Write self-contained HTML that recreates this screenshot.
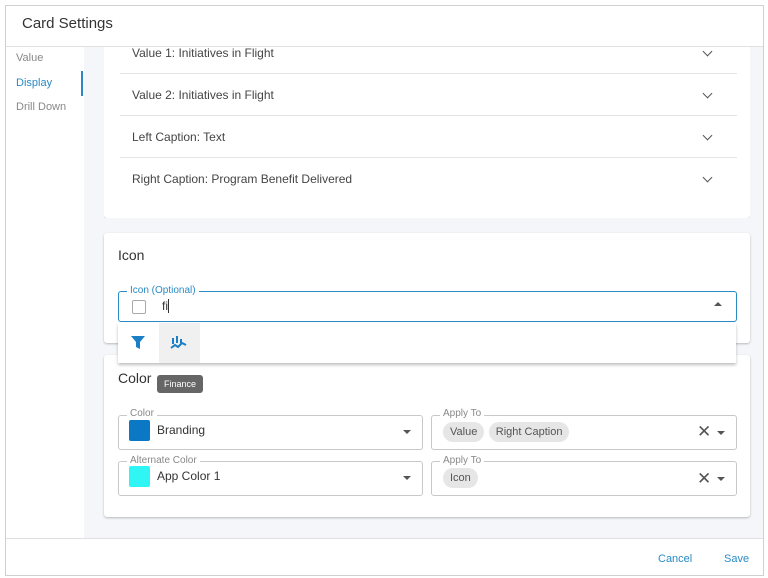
<!DOCTYPE html><html><head><style>
*{box-sizing:border-box;margin:0;padding:0}
body{width:768px;height:578px;background:#fff;font-family:"Liberation Sans",sans-serif;position:relative;overflow:hidden;color:#333}
.a{position:absolute}
.dlg{left:5px;top:5px;width:759px;height:571px;border:1px solid #d0d0d0;background:#fff}
.t{font-size:15px;color:#333}
.card{background:#fff;box-shadow:0 1px 2px rgba(0,0,0,.25);border-radius:3px}
.row{left:120px;width:617px;font-size:12px;color:#444;border-bottom:1px solid #e4e4e4}
.chev{right:26px;width:7px;height:7px;border-right:1.5px solid #555;border-bottom:1.5px solid #555;transform:rotate(45deg)}
.fld{border:1px solid #c8c8c8;border-radius:3px;height:35px}
.lbl{font-size:10px;color:#888;background:#fff;padding:0 3px}
.chip{background:#e6e6e6;border-radius:11px;font-size:11px;color:#555;padding:4px 7px;display:inline-block}
.tri{width:0;height:0;border-left:4px solid transparent;border-right:4px solid transparent;border-top:4px solid #555}
</style></head><body>
<div class="a dlg"></div>
<div class="a card" style="left:104px;top:40px;width:646px;height:178px"></div>
<div class="a" style="left:6px;top:6px;width:757px;height:40px;background:#fff"></div>
<div class="a t" style="left:22px;top:15px">Card Settings</div>
<div class="a" style="left:6px;top:46px;width:757px;border-top:1px solid #e0e0e0"></div>
<div class="a" style="left:84px;top:47px;width:20px;height:491px;background:#f4f6f9"></div>
<div class="a" style="left:104px;top:218px;width:659px;height:320px;background:#f4f6f9"></div>
<div class="a" style="left:750px;top:47px;width:13px;height:171px;background:#f4f6f9"></div>
<div class="a" style="left:16px;top:52px;font-size:11px;color:#888">Value</div>
<div class="a" style="left:16px;top:77px;font-size:11px;color:#2a8ac4">Display</div>
<div class="a" style="left:81px;top:71px;width:2px;height:25px;background:#2a8ac4"></div>
<div class="a" style="left:16px;top:101px;font-size:11px;color:#888">Drill Down</div>
<div class="a row" style="top:46px;height:28px;padding:0 12px">Value 1: Initiatives in Flight<div class="a chev" style="top:2px"></div></div>
<div class="a row" style="top:74px;height:42px;padding:14px 12px">Value 2: Initiatives in Flight<div class="a chev" style="top:16px"></div></div>
<div class="a row" style="top:116px;height:42px;padding:14px 12px">Left Caption: Text<div class="a chev" style="top:16px"></div></div>
<div class="a" style="left:120px;top:158px;width:617px;height:42px;padding:14px 12px;font-size:12px;color:#444">Right Caption: Program Benefit Delivered<div class="a chev" style="top:16px"></div></div>
<div class="a card" style="left:104px;top:233px;width:646px;height:110px"></div>
<div class="a t" style="left:118px;top:247px;font-size:14px">Icon</div>
<div class="a" style="left:118px;top:291px;width:619px;height:31px;border:1.5px solid #2a8ac4;border-radius:3px"></div>
<div class="a" style="left:127px;top:285px;font-size:10px;color:#2a8ac4;background:#fff;padding:0 3px">Icon (Optional)</div>
<div class="a" style="left:132px;top:300px;width:14px;height:14px;border:1px solid #aaa;border-radius:2px"></div>
<div class="a" style="left:162px;top:299px;font-size:12px;color:#333">f<span style="border-right:1px solid #333">i</span></div>
<div class="a tri" style="left:714px;top:302px;transform:rotate(180deg)"></div>
<div class="a card" style="left:104px;top:355px;width:646px;height:162px"></div>
<div class="a" style="left:118px;top:323px;width:618px;height:40px;background:#fff;box-shadow:0 2px 3px rgba(0,0,0,.25)"></div>
<div class="a" style="left:159px;top:323px;width:41px;height:40px;background:#f0f0f0"></div>
<svg class="a" style="left:131px;top:336px" width="14" height="13" viewBox="0 0 14 13"><path d="M0 0H14L9 6V13L5 11V6Z" fill="#1a7fc4"/></svg>
<svg class="a" style="left:170px;top:334px" width="18" height="16" viewBox="0 0 18 16"><g stroke="#1a7fc4" stroke-width="2" fill="none"><path d="M3 4V10M7 2V9M11 5V9"/><path d="M1 14L5 11L8 13L12 9L16 11"/></g></svg>
<div class="a t" style="left:118px;top:370px;font-size:14px">Color</div>
<div class="a" style="left:157px;top:375px;background:#666;color:#fff;font-size:9px;padding:4px 7px;border-radius:3px">Finance</div>
<div class="a fld" style="left:118px;top:415px;width:305px"></div>
<div class="a lbl" style="left:127px;top:408px">Color</div>
<div class="a" style="left:129px;top:420px;width:21px;height:21px;background:#0a78c4;border-radius:2px"></div>
<div class="a" style="left:157px;top:423px;font-size:12px;color:#333">Branding</div>
<div class="a tri" style="left:403px;top:430px"></div>
<div class="a fld" style="left:118px;top:461px;width:305px"></div>
<div class="a lbl" style="left:127px;top:455px">Alternate Color</div>
<div class="a" style="left:129px;top:466px;width:21px;height:21px;background:#2ff5f5;border-radius:2px"></div>
<div class="a" style="left:157px;top:469px;font-size:12px;color:#333">App Color 1</div>
<div class="a tri" style="left:403px;top:476px"></div>
<div class="a fld" style="left:431px;top:415px;width:306px"></div>
<div class="a lbl" style="left:440px;top:408px">Apply To</div>
<div class="a" style="left:443px;top:422px"><span class="chip">Value</span> <span class="chip">Right Caption</span></div>
<div class="a" style="left:697px;top:423px;font-size:17px;color:#555;line-height:17px">✕</div>
<div class="a tri" style="left:717px;top:431px"></div>
<div class="a fld" style="left:431px;top:461px;width:306px"></div>
<div class="a lbl" style="left:440px;top:455px">Apply To</div>
<div class="a" style="left:443px;top:468px"><span class="chip">Icon</span></div>
<div class="a" style="left:697px;top:470px;font-size:17px;color:#555;line-height:17px">✕</div>
<div class="a tri" style="left:717px;top:477px"></div>
<div class="a" style="left:6px;top:538px;width:757px;border-top:1px solid #e0e0e0"></div>
<div class="a" style="left:658px;top:553px;font-size:11px;color:#2a8ac4">Cancel</div>
<div class="a" style="left:724px;top:553px;font-size:11px;color:#2a8ac4">Save</div>
</body></html>
